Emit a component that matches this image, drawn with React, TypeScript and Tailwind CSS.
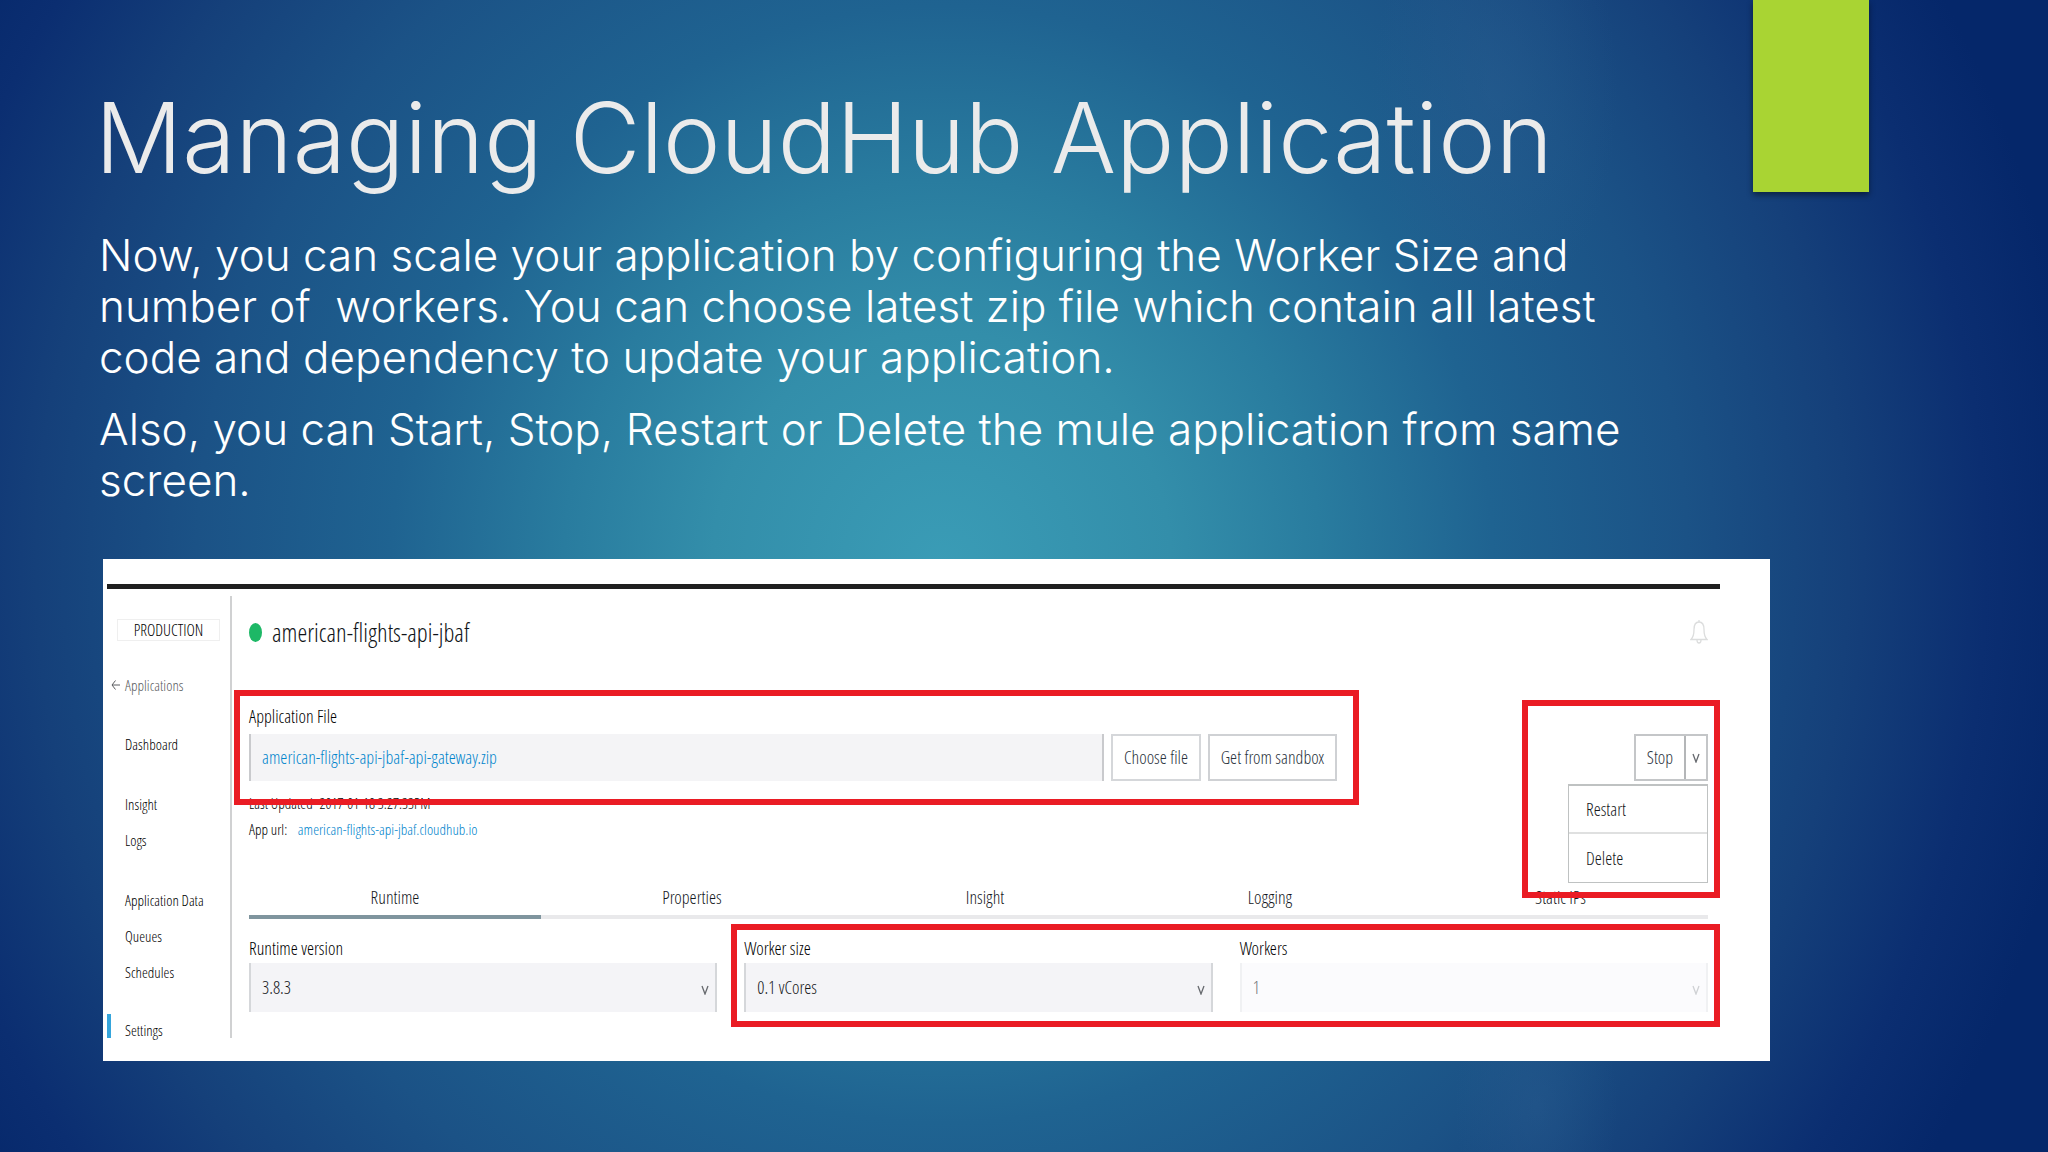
import React from 'react';

type SidebarLink = { label: string; gap: string };

const sidebarLinks: SidebarLink[] = [
  { label: 'Dashboard', gap: 'mt-[39px]' },
  { label: 'Insight', gap: 'mt-10' },
  { label: 'Logs', gap: 'mt-4' },
  { label: 'Application Data', gap: 'mt-10' },
  { label: 'Queues', gap: 'mt-4' },
  { label: 'Schedules', gap: 'mt-4' },
];

const tabs = ['Runtime', 'Properties', 'Insight', 'Logging', 'Static IPs'];

function Chevron({ className }: { className: string }) {
  return (
    <svg viewBox="0 0 8 10" fill="none" stroke="currentColor" strokeWidth="1.3" className={className} aria-hidden="true">
      <path d="M1 1 L4 9 L7 1" />
    </svg>
  );
}

function Highlight({ className }: { className: string }) {
  return <div aria-hidden="true" className={`pointer-events-none absolute border-[#ea1c24] ${className}`} />;
}

function SelectField({ id, label, value, disabled }: { id: string; label: string; value: string; disabled?: boolean }) {
  return (
    <div className="min-w-0">
      <label htmlFor={id} className="block text-[18px] leading-5 text-black">
        {label}
      </label>
      <div className="relative mt-[5px]">
        <select
          id={id}
          disabled={disabled}
          defaultValue={value}
          className={
            disabled
              ? 'h-[49px] w-full appearance-none border-x-2 border-[#f0f1f3] bg-[#fbfbfd] px-[11px] text-[18px] text-[#6f7378] opacity-100'
              : 'h-[49px] w-full appearance-none border-x-2 border-[#d5d7da] bg-[#f4f4f7] px-[11px] text-[18px] text-[#14171a]'
          }
        >
          <option>{value}</option>
        </select>
        <Chevron
          className={
            disabled
              ? 'pointer-events-none absolute top-[22px] right-2 h-2.5 w-2 text-[#cfd1d4]'
              : 'pointer-events-none absolute top-[22px] right-2 h-2.5 w-2 text-[#66696e]'
          }
        />
      </div>
    </div>
  );
}

function Sidebar() {
  return (
    <aside className="w-[125px] shrink-0 border-r-2 border-[#d0d1d2] text-[15px] leading-5 text-black">
      <div className="mx-2.5 mt-[23px] h-[22px] border border-[#efefef] text-center text-[16px]">PRODUCTION</div>
      <nav>
        <a href="#applications" className="mt-[34px] flex items-center text-[#5b5d60]">
          <svg viewBox="0 0 10 12" fill="none" stroke="currentColor" strokeWidth="1" className="mr-1 ml-1 h-3 w-2.5" aria-hidden="true">
            <path d="M9 6 H1 M4.5 1.5 L1 6 L4.5 10.5" />
          </svg>
          Applications
        </a>
        {sidebarLinks.map((link) => (
          <a key={link.label} href="#section" className={`block pl-[18px] whitespace-nowrap ${link.gap}`}>
            {link.label}
          </a>
        ))}
        <a href="#settings" aria-current="page" className="mt-8 block h-6 border-l-4 border-[#35a5dc] pt-1.5 pl-3.5">
          Settings
        </a>
      </nav>
    </aside>
  );
}

function ApplicationFile() {
  return (
    <div className="relative min-w-0 flex-1">
      <label htmlFor="app-file" className="block text-[18px] leading-5 text-black">
        Application File
      </label>
      <div className="mt-2 flex h-[47px] gap-[7px]">
        <input
          id="app-file"
          readOnly
          defaultValue="american-flights-api-jbaf-api-gateway.zip"
          className="min-w-0 flex-1 border-x-2 border-[#c9cacd] bg-[#f4f4f6] px-[11px] text-[18px] text-[#0084cc]"
        />
        <button type="button" className="w-[90px] border-2 border-[#d5d7da] text-[18px] whitespace-nowrap text-[#2a333d]">
          Choose file
        </button>
        <button type="button" className="w-[129px] border-2 border-[#cfd1d4] text-[18px] whitespace-nowrap text-[#2a333d]">
          Get from sandbox
        </button>
      </div>
      <Highlight className="-top-4 -right-[22px] -bottom-6 -left-[15px] z-10 border-6" />
    </div>
  );
}

function Actions() {
  return (
    <div className="relative w-[140px] pt-7">
      <div className="ml-auto flex h-[47px] w-[74px] border-2 border-[#c4c6c8] text-[18px] text-[#2a333d]">
        <button type="button" className="flex-1">
          Stop
        </button>
        <button type="button" aria-label="More actions" className="flex w-[22px] items-center justify-center border-l-2 border-[#b4b6b8] text-[#66696e]">
          <Chevron className="h-2.5 w-2" />
        </button>
      </div>
      <ul role="menu" className="absolute top-[78px] left-0 h-[99px] w-full border border-t-2 border-[#bfc2c2] bg-white text-[18px] text-[#14171a]">
        <li role="none" className="h-1/2 border-b-2 border-[#dfe0e0]">
          <button type="button" role="menuitem" className="h-full w-full pl-[17px] text-left">
            Restart
          </button>
        </li>
        <li role="none" className="h-1/2">
          <button type="button" role="menuitem" className="h-full w-full pl-[17px] text-left">
            Delete
          </button>
        </li>
      </ul>
      <Highlight className="-top-1.5 -right-3 -left-[46px] z-10 h-[198px] border-6" />
    </div>
  );
}

function RuntimePanel() {
  return (
    <div className="grid h-[442px] min-w-0 flex-1 content-start pr-3 pl-[17px]">
      <header className="mt-5 flex h-8 items-center">
        <span className="h-[19px] w-[13px] rounded-[50%] bg-[#1db866]" />
        <h2 className="ml-2.5 text-[25px] leading-8 text-[#101418]">american-flights-api-jbaf</h2>
        <button type="button" aria-label="Notifications" className="ml-auto text-[#dcdddd]">
          <svg viewBox="0 0 18 26" fill="none" stroke="currentColor" strokeWidth="1.3" className="h-[26px] w-[18px]" aria-hidden="true">
            <path d="M1 20.5 C3.5 18 4 15 4 10.500 C4 5.500 6 3 9 3 C12 3 14 5.500 14 10.500 C14 15 14.500 18 17 20.500 Z" />
            <path d="M9 1 V3 M7 21 C7 25 11 25 11 21" />
          </svg>
        </button>
      </header>

      <div className="mt-[58px] flex items-start justify-between">
        <ApplicationFile />
        <div className="ml-[231px]">
          <Actions />
        </div>
      </div>

      <p className="mt-3 text-[15px] leading-5 text-black">Last Updated&nbsp; 2017-01-18 3:27:33PM</p>
      <p className="mt-1.5 text-[15px] leading-5 text-black">
        App url:&nbsp; &nbsp;
        <a href="#app" className="text-[#0084cc]">
          american-flights-api-jbaf.cloudhub.io
        </a>
      </p>

      <div role="tablist" className="mt-12 grid grid-cols-[292fr_302fr_284fr_286fr_295fr] text-[18px] leading-5 text-[#14171c]">
        {tabs.map((tab, i) => (
          <button
            key={tab}
            type="button"
            role="tab"
            aria-selected={i === 0}
            className={i === 0 ? 'border-b-4 border-[#7f959e] pb-2' : 'border-b-4 border-[#e9e9eb] pb-2'}
          >
            {tab}
          </button>
        ))}
      </div>

      <div className="mt-[19px] grid grid-cols-3 gap-[27px]">
        <SelectField id="runtime" label="Runtime version" value="3.8.3" />
        <div className="relative col-span-2 grid grid-cols-2 gap-[27px]">
          <SelectField id="worker-size" label="Worker size" value="0.1 vCores" />
          <SelectField id="workers" label="Workers" value="1" disabled />
          <Highlight className="-top-3.5 -right-3 -bottom-[15px] -left-[13px] border-6" />
        </div>
      </div>
    </div>
  );
}

export default function App() {
  return (
    <main className="relative min-h-screen overflow-hidden bg-[#05276a] bg-[radial-gradient(ellipse_6%_20%_at_73%_8%,#2c5f9260,transparent),radial-gradient(ellipse_4%_12%_at_75%_96%,#2c5f9260,transparent),radial-gradient(ellipse_56%_101%_at_46%_49%,#3a9cb6_0%,#338eaa_20%,#297c9f_33%,#1f6391_48%,#1b5286_65%,#15407a_79%,#0b2e71_91%,#05276a_100%)] pt-[88px] pr-[278px] pb-[90px] pl-[103px] [font-family:'Inter',sans-serif]">
      <div aria-hidden="true" className="absolute top-0 right-[179px] h-48 w-[116px] bg-[#a9d433] shadow-[0_3px_6px_rgba(0,0,0,0.45)]" />

      <h1 className="-ml-2 text-[97px] leading-[100px] font-light whitespace-nowrap text-[#ebebeb]">Managing CloudHub Application</h1>

      <div className="mt-[42px] -ml-1 text-[44px] leading-[51px] font-light whitespace-nowrap text-white">
        <p>
          Now, you can scale your application by configuring the Worker Size and
          <br />
          number of &nbsp;workers. You can choose latest zip file which contain all latest
          <br />
          code and dependency to update your application.
        </p>
        <p className="mt-[21px]">
          Also, you can Start, Stop, Restart or Delete the mule application from same
          <br />
          screen.
        </p>
      </div>

      <section className="mt-[53px] bg-white pt-[25px] pr-[50px] pb-[23px] pl-1 [font-family:'Open_Sans_Condensed_Light','Roboto_Condensed','Open_Sans',sans-serif]">
        <div className="h-[5px] bg-[#1f1f1f]" />
        <div className="flex pt-[7px]">
          <Sidebar />
          <RuntimePanel />
        </div>
      </section>
    </main>
  );
}
